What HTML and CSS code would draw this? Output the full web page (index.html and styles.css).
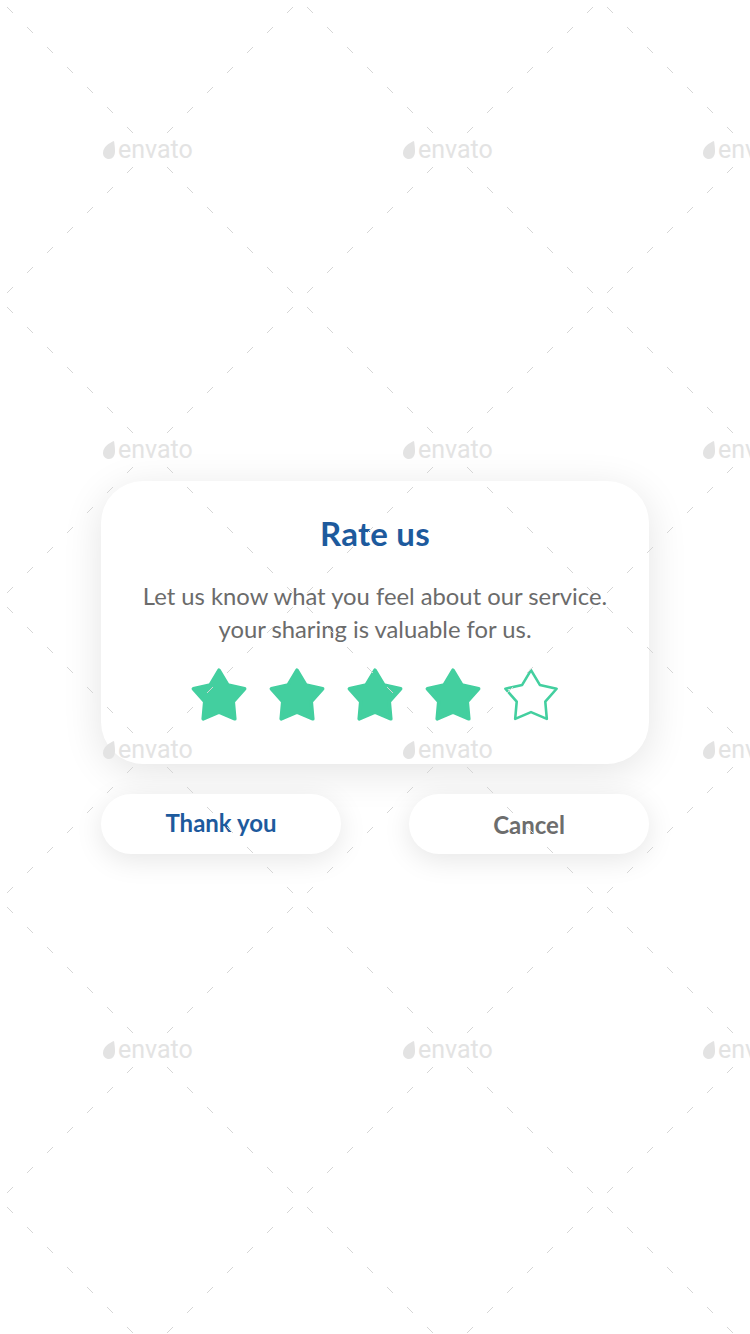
FILE: index.html
```html
<!DOCTYPE html>
<html lang="en">
<head>
<meta charset="utf-8">
<title>Rate us</title>
<link rel="stylesheet" href="styles.css">
</head>
<body>
<main class="screen">
  <section class="dialog">
    <div class="card">
      <h1 class="title">Rate us</h1>
      <p class="message">Let us know what you feel about our service.<br>your sharing is valuable for us.</p>
      <div class="stars">
        <svg class="star" viewBox="0 0 56 52"><path class="full" d="M28 2 L36.52 16.27 L52.73 19.97 L41.79 32.48 L43.28 49.03 L28 42.5 L12.72 49.03 L14.21 32.48 L3.27 19.97 L19.48 16.27 Z"/></svg>
        <svg class="star" viewBox="0 0 56 52"><path class="full" d="M28 2 L36.52 16.27 L52.73 19.97 L41.79 32.48 L43.28 49.03 L28 42.5 L12.72 49.03 L14.21 32.48 L3.27 19.97 L19.48 16.27 Z"/></svg>
        <svg class="star" viewBox="0 0 56 52"><path class="full" d="M28 2 L36.52 16.27 L52.73 19.97 L41.79 32.48 L43.28 49.03 L28 42.5 L12.72 49.03 L14.21 32.48 L3.27 19.97 L19.48 16.27 Z"/></svg>
        <svg class="star" viewBox="0 0 56 52"><path class="full" d="M28 2 L36.52 16.27 L52.73 19.97 L41.79 32.48 L43.28 49.03 L28 42.5 L12.72 49.03 L14.21 32.48 L3.27 19.97 L19.48 16.27 Z"/></svg>
        <svg class="star" viewBox="0 0 56 52"><path class="empty" d="M28 2 L36.52 16.27 L52.73 19.97 L41.79 32.48 L43.28 49.03 L28 42.5 L12.72 49.03 L14.21 32.48 L3.27 19.97 L19.48 16.27 Z"/></svg>
      </div>
    </div>
    <div class="actions">
      <button class="btn btn-primary">Thank you</button>
      <button class="btn btn-secondary">Cancel</button>
    </div>
  </section>

  <svg class="watermark" width="750" height="1334" viewBox="0 0 750 1334" aria-hidden="true">
    <defs>
      <pattern id="wm" patternUnits="userSpaceOnUse" width="300" height="300">
        <g class="wm-lines">
          <line x1="0" y1="0" x2="140" y2="140"/>
          <line x1="160" y1="160" x2="300" y2="300"/>
          <line x1="300" y1="0" x2="160" y2="140"/>
          <line x1="140" y1="160" x2="0" y2="300"/>
        </g>
      </pattern>
      <g id="logo">
        <path d="M11 0 C6 2 0 6 0 12 C0 15.5 2.5 18 6 18 C9.5 18 12 15 12 10.5 C12 6 11.5 3 11 0 Z"/>
        <text x="15" y="17">envato</text>
      </g>
    </defs>
    <rect width="750" height="1334" fill="url(#wm)"/>
    <g class="wm-logos">
      <use href="#logo" x="103" y="141"/>
      <use href="#logo" x="403" y="141"/>
      <use href="#logo" x="703" y="141"/>
      <use href="#logo" x="103" y="441"/>
      <use href="#logo" x="403" y="441"/>
      <use href="#logo" x="703" y="441"/>
      <use href="#logo" x="103" y="741"/>
      <use href="#logo" x="403" y="741"/>
      <use href="#logo" x="703" y="741"/>
      <use href="#logo" x="103" y="1041"/>
      <use href="#logo" x="403" y="1041"/>
      <use href="#logo" x="703" y="1041"/>
    </g>
  </svg>
</main>
</body>
</html>
```

FILE: styles.css
```css
* { box-sizing: border-box; }

html, body {
  margin: 0;
  padding: 0;
  background: #ffffff;
}

body {
  font-family: Lato, "Noto Sans", sans-serif;
  width: 750px;
  height: 1334px;
  overflow: hidden;
}

.screen {
  position: relative;
  width: 750px;
  height: 1334px;
  padding: 481px 101px 0;
}

.dialog {
  display: flex;
  flex-direction: column;
  gap: 30px;
  width: 548px;
}

.card {
  height: 283px;
  background: #ffffff;
  border-radius: 42px;
  box-shadow: 0 8px 40px rgba(0, 0, 0, 0.11);
  display: flex;
  flex-direction: column;
  align-items: center;
  padding-top: 32px;
}

.title {
  margin: 0;
  font-size: 33px;
  line-height: 40px;
  font-weight: 700;
  color: #1d5a9d;
  letter-spacing: 0.2px;
}

.message {
  margin: 27px 0 0;
  font-size: 23.8px;
  line-height: 33px;
  font-weight: 400;
  color: #6b6b6b;
  text-align: center;
}

.stars {
  display: flex;
  gap: 20px;
  margin-top: 22px;
}

.star {
  width: 58px;
  height: 54px;
  display: block;
}

.star .full {
  fill: #43cf9f;
  stroke: #43cf9f;
  stroke-width: 3.4;
  stroke-linejoin: round;
}

.star .empty {
  fill: none;
  stroke: #43cf9f;
  stroke-width: 2.5;
  stroke-linejoin: round;
}

.actions {
  display: flex;
  justify-content: space-between;
}

.btn {
  width: 240px;
  height: 60px;
  border: none;
  border-radius: 30px;
  background: #ffffff;
  box-shadow: 0 6px 28px rgba(0, 0, 0, 0.10);
  font-family: Lato, "Noto Sans", sans-serif;
  font-size: 24px;
  font-weight: 700;
  padding: 0;
  cursor: pointer;
}

.btn-primary {
  color: #1d5a9d;
  padding-bottom: 4px;
}

.btn-secondary {
  color: #6d6d6d;
}

.watermark {
  position: absolute;
  top: 0;
  left: 0;
  pointer-events: none;
}

.wm-lines line {
  stroke: #d6d6d6;
  stroke-width: 1;
  stroke-dasharray: 8.5 19.78;
  stroke-dashoffset: -9.9;
}

.wm-logos {
  fill: #e3e3e3;
  font-family: Roboto, "Noto Sans", sans-serif;
  font-size: 25px;
  font-weight: 400;
}
```
